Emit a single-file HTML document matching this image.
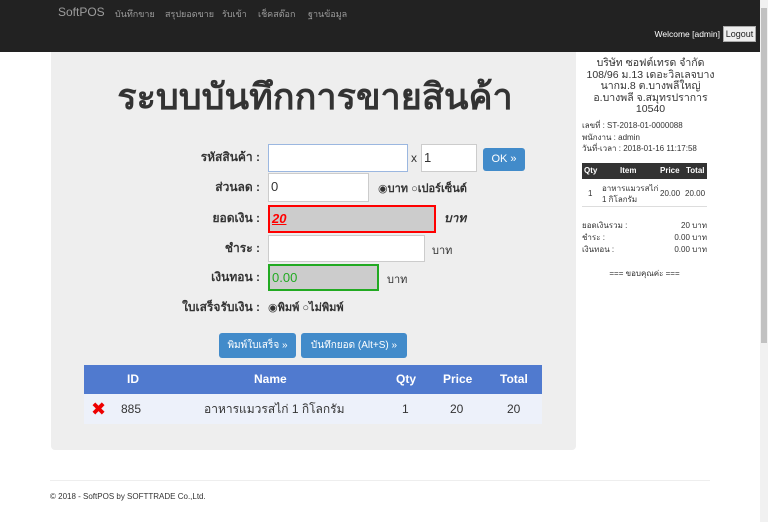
<!DOCTYPE html>
<html><head><meta charset="utf-8"><style>
*{box-sizing:border-box;margin:0;padding:0}
body{width:768px;height:522px;overflow:hidden;background:#fff;font-family:"Liberation Sans","DejaVu Sans",sans-serif;color:#333;position:relative;font-size:12px}
.abs{position:absolute}
.nav{left:0;top:0;width:760px;height:52px;background:#222}
.nav span{position:absolute;color:#9d9d9d;font-size:9px;top:7px}
.sb{left:760px;top:0;width:8px;height:522px;background:#f1f1f1}
.thumb{left:761px;top:8px;width:6px;height:335px;background:#c1c1c1}
.panel{left:51px;top:52px;width:525px;height:398px;background:#eee;border-radius:0 0 4px 4px}
.lbl{font-weight:bold;font-size:12px;text-align:right;width:200px;left:60px;color:#333;line-height:16px}
.inp{background:#fff;border:1px solid #ccc;font-size:13px;padding-left:2px;line-height:26px}
.btn{background:#428bca;color:#fff;border-radius:3px;font-size:10px;text-align:center}
.unit{font-size:11px}
</style></head><body>
<div class="abs nav">
<span style="left:58px;font-size:12px;top:5px">SoftPOS</span>
<span style="left:115px">บันทึกขาย</span>
<span style="left:165px">สรุปยอดขาย</span>
<span style="left:222px">รับเข้า</span>
<span style="left:258px">เช็คสต๊อก</span>
<span style="left:308px">ฐานข้อมูล</span>
<span style="left:600px;width:120px;text-align:right;top:29px;color:#fff;font-size:8.5px;white-space:nowrap">Welcome [admin]</span>
<div class="abs" style="left:723px;top:26px;width:33px;height:16px;background:#eee;border:1px solid #aaa;font-size:9px;color:#222;text-align:center;line-height:14px">Logout</div>
</div>
<div class="abs sb"></div><div class="abs thumb"></div>
<div class="abs panel"></div>
<div class="abs" style="left:100px;top:72px;width:430px;text-align:center;font-size:36px;font-weight:bold;color:#333;line-height:50px">ระบบบันทึกการขายสินค้า</div>

<div class="abs lbl" style="top:149px">รหัสสินค้า :</div>
<div class="abs inp" style="left:268px;top:144px;width:140px;height:28px;border-color:#9bb7e0"></div>
<div class="abs" style="left:411px;top:151px;font-size:12px">x</div>
<div class="abs inp" style="left:421px;top:144px;width:56px;height:28px">1</div>
<div class="abs btn" style="left:483px;top:148px;width:42px;height:23px;line-height:23px;font-size:11px">OK »</div>

<div class="abs lbl" style="top:179px">ส่วนลด :</div>
<div class="abs inp" style="left:268px;top:173px;width:101px;height:29px">0</div>
<div class="abs" style="left:378px;top:179px;font-size:11px;font-weight:bold">◉บาท ○เปอร์เซ็นต์</div>

<div class="abs lbl" style="top:210px">ยอดเงิน :</div>
<div class="abs inp" style="left:268px;top:205px;width:168px;height:28px;background:#ccc;border:2px solid #f00;color:#f00;font-weight:bold;font-style:italic;text-decoration:underline;line-height:24px">20</div>
<div class="abs" style="left:444px;top:209px;font-size:12px;font-weight:bold;font-style:italic">บาท</div>

<div class="abs lbl" style="top:240px">ชำระ :</div>
<div class="abs inp" style="left:268px;top:235px;width:157px;height:27px"></div>
<div class="abs unit" style="left:432px;top:241px">บาท</div>

<div class="abs lbl" style="top:269px">เงินทอน :</div>
<div class="abs inp" style="left:268px;top:264px;width:111px;height:27px;background:#ccc;border:2px solid #2a2;color:#2a2;line-height:23px">0.00</div>
<div class="abs unit" style="left:387px;top:270px">บาท</div>

<div class="abs lbl" style="top:299px">ใบเสร็จรับเงิน :</div>
<div class="abs" style="left:268px;top:298px;font-size:11px;font-weight:bold">◉พิมพ์ ○ไม่พิมพ์</div>

<div class="abs btn" style="left:219px;top:333px;width:77px;height:25px;line-height:25px">พิมพ์ใบเสร็จ »</div>
<div class="abs btn" style="left:301px;top:333px;width:106px;height:25px;line-height:25px">บันทึกยอด (Alt+S) »</div>

<div class="abs" style="left:84px;top:365px;width:458px;height:29px;background:#507acf;color:#fff;font-weight:bold;font-size:12px;line-height:29px">
<span class="abs" style="left:43px">ID</span><span class="abs" style="left:170px">Name</span><span class="abs" style="left:312px">Qty</span><span class="abs" style="left:359px">Price</span><span class="abs" style="left:416px">Total</span></div>
<div class="abs" style="left:84px;top:394px;width:458px;height:30px;background:#edf1fa;font-size:12px;line-height:30px">
<span class="abs" style="left:7px;color:#e00;font-weight:bold;font-size:18px">✖</span><span class="abs" style="left:37px">885</span><span class="abs" style="left:120px">อาหารแมวรสไก่ 1 กิโลกรัม</span><span class="abs" style="left:318px">1</span><span class="abs" style="left:366px">20</span><span class="abs" style="left:423px">20</span></div>

<div class="abs" style="left:50px;top:480px;width:660px;height:1px;background:#eee"></div>
<div class="abs" style="left:50px;top:492px;font-size:8px;color:#333">© 2018 - SoftPOS by SOFTTRADE Co.,Ltd.</div>

<div class="abs" style="left:578px;top:58px;width:145px;text-align:center;font-size:10.5px;line-height:11.5px">บริษัท ซอฟต์เทรด จำกัด<br>108/96 ม.13 เดอะวิลเลจบาง นากม.8 ต.บางพลีใหญ่<br>อ.บางพลี จ.สมุทรปราการ<br>10540</div>
<div class="abs" style="left:582px;top:120px;font-size:8px;line-height:11.5px">เลขที่ : ST-2018-01-0000088<br>พนักงาน : admin<br>วันที่-เวลา : 2018-01-16 11:17:58</div>
<div class="abs" style="left:582px;top:163px;width:125px;height:16px;background:#333;color:#fff;font-size:8px;font-weight:bold;line-height:16px">
<span class="abs" style="left:2px">Qty</span><span class="abs" style="left:38px">Item</span><span class="abs" style="left:78px">Price</span><span class="abs" style="left:104px">Total</span></div>
<div class="abs" style="left:582px;top:179px;width:125px;height:28px;border-bottom:1px solid #ddd;font-size:8px">
<span class="abs" style="left:6px;top:10px">1</span><span class="abs" style="left:20px;top:4px;line-height:11px">อาหารแมวรสไก่<br>1 กิโลกรัม</span><span class="abs" style="left:78px;top:10px">20.00</span><span class="abs" style="left:103px;top:10px">20.00</span></div>
<div class="abs" style="left:582px;top:220px;width:125px;font-size:8px;line-height:12px">ยอดเงินรวม :<br>ชำระ :<br>เงินทอน :</div>
<div class="abs" style="left:582px;top:220px;width:125px;font-size:8px;line-height:12px;text-align:right">20 บาท<br>0.00 บาท<br>0.00 บาท</div>
<div class="abs" style="left:582px;top:267px;width:125px;font-size:8px;text-align:center">=== ขอบคุณค่ะ ===</div>
</body></html>
